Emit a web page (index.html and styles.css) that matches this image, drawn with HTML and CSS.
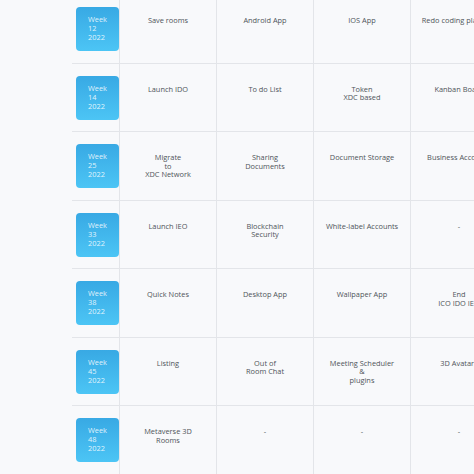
FILE: index.html
```html
<!DOCTYPE html>
<html>
<head>
<meta charset="utf-8">
<link rel="stylesheet" href="styles.css">
</head>
<body>
<div class="board">
  <div class="row">
    <div class="week"><div class="badge">Week<br>12<br>2022</div></div>
    <div class="cell">Save rooms</div>
    <div class="cell">Android App</div>
    <div class="cell">IOS App</div>
    <div class="cell">Redo coding platform</div>
  </div>
  <div class="row">
    <div class="week"><div class="badge">Week<br>14<br>2022</div></div>
    <div class="cell">Launch IDO</div>
    <div class="cell">To do List</div>
    <div class="cell">Token<br>XDC based</div>
    <div class="cell">Kanban Board</div>
  </div>
  <div class="row">
    <div class="week"><div class="badge">Week<br>25<br>2022</div></div>
    <div class="cell">Migrate<br>to<br>XDC Network</div>
    <div class="cell">Sharing<br>Documents</div>
    <div class="cell">Document Storage</div>
    <div class="cell">Business Accounts</div>
  </div>
  <div class="row">
    <div class="week"><div class="badge">Week<br>33<br>2022</div></div>
    <div class="cell">Launch IEO</div>
    <div class="cell">Blockchain<br>Security</div>
    <div class="cell">White-label Accounts</div>
    <div class="cell">-</div>
  </div>
  <div class="row">
    <div class="week"><div class="badge">Week<br>38<br>2022</div></div>
    <div class="cell">Quick Notes</div>
    <div class="cell">Desktop App</div>
    <div class="cell">Wallpaper App</div>
    <div class="cell">End<br>ICO IDO IEO</div>
  </div>
  <div class="row">
    <div class="week"><div class="badge">Week<br>45<br>2022</div></div>
    <div class="cell">Listing</div>
    <div class="cell">Out of<br>Room Chat</div>
    <div class="cell">Meeting Scheduler<br>&amp;<br>plugins</div>
    <div class="cell">3D Avatars</div>
  </div>
  <div class="row">
    <div class="week"><div class="badge">Week<br>48<br>2022</div></div>
    <div class="cell">Metaverse 3D<br>Rooms</div>
    <div class="cell">-</div>
    <div class="cell">-</div>
    <div class="cell">-</div>
  </div>
</div>
</body>
</html>
```

FILE: styles.css
```css
html, body {
  margin: 0;
  padding: 0;
  background: #f8f9fb;
  overflow: hidden;
}
body {
  width: 474px;
  height: 474px;
  font-family: "Open Sans", "Noto Sans", sans-serif;
  color: #4f545a;
}
.board {
  margin-top: -5px;
  margin-left: 72px;
  width: 440px;
}
.row {
  display: flex;
  height: 68.5px;
  box-sizing: border-box;
  border-bottom: 1px solid #e3e5e9;
}
.week {
  flex: 0 0 47px;
  box-sizing: border-box;
  padding: 12px 0 0 4px;
}
.badge {
  width: 43px;
  height: 44px;
  box-sizing: border-box;
  padding: 8px 0 0 12px;
  border-radius: 4px;
  background: linear-gradient(180deg, #38a9e4 0%, #4cc5f5 100%);
  color: rgba(255,255,255,0.85);
  font-size: 7.4px;
  line-height: 9px;
}
.cell {
  flex: 0 0 97px;
  box-sizing: border-box;
  border-left: 1px solid #e3e5e9;
  padding-top: 21px;
  text-align: center;
  font-size: 7.4px;
  line-height: 8.7px;
  white-space: nowrap;
  overflow: hidden;
}
```
